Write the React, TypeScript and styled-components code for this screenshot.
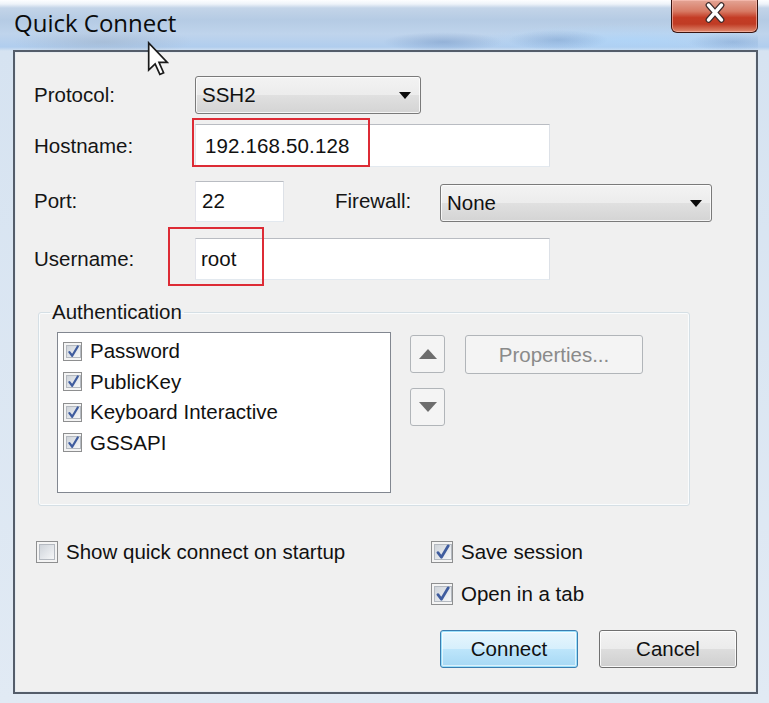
import React from "react";
import styled, { createGlobalStyle } from "styled-components";

const Global = createGlobalStyle`
  html, body { margin: 0; padding: 0; background: #ffffff; }
  body { font-family: "Liberation Sans", Arial, sans-serif; color: #141414; }
`;

const Window = styled.div`
  position: relative;
  width: 769px;
  height: 703px;
  box-sizing: border-box;
  display: flex;
  flex-direction: column;
  padding: 0 11px 9px 13px;
  overflow: hidden;
  background: linear-gradient(
    180deg,
    #fdfeff 0px,
    #eef3f9 4px,
    #c3d4e8 8px,
    #b5cbe4 20px,
    #bfd4ec 34px,
    #b0cdee 47px,
    #d6e3f1 51px,
    #e1eaf4 100%
  );
`;

const TitleBar = styled.div`
  height: 50px;
  flex: none;
  display: flex;
  align-items: flex-start;
  background:
    radial-gradient(ellipse 60px 10px at 430px 42px, rgba(60, 100, 160, 0.28), transparent),
    radial-gradient(ellipse 50px 10px at 545px 40px, rgba(60, 100, 160, 0.25), transparent),
    radial-gradient(ellipse 45px 9px at 720px 42px, rgba(60, 100, 160, 0.22), transparent),
    radial-gradient(ellipse 90px 14px at 90px 42px, rgba(120, 130, 145, 0.22), transparent),
    radial-gradient(ellipse 160px 16px at 620px 40px, rgba(170, 215, 255, 0.55), transparent);
`;

const Title = styled.div`
  padding: 8px 0 0 1px;
  font-family: "Open Sans", "Liberation Sans", sans-serif;
  font-size: 24px;
  line-height: 30px;
  color: #0b0b0b;
`;

const CloseButton = styled.div`
  margin-left: auto;
  width: 87px;
  height: 33px;
  box-sizing: border-box;
  border: 1px solid #3a1410;
  border-top: none;
  border-radius: 0 0 6px 6px;
  display: flex;
  justify-content: center;
  align-items: flex-start;
  padding-top: 2px;
  background: linear-gradient(180deg, #e4a596 0%, #d77a64 35%, #c43c25 55%, #c03b24 75%, #df8a6f 100%);
  box-shadow: inset 0 0 0 1px rgba(255, 200, 190, 0.55);
`;

const Cursor = styled.svg`
  position: absolute;
  left: 147px;
  top: 41px;
  pointer-events: none;
`;

const Client = styled.div`
  flex: 1;
  display: flex;
  flex-direction: column;
  box-sizing: border-box;
  border: 2px solid #545d6a;
  background: #f0f0f0;
  padding: 0 0 0 19px;
  box-shadow: inset 0 0 0 1px #e6ebf0;
`;

const Row = styled.div<{ $top: number; $h: number }>`
  display: flex;
  align-items: center;
  margin-top: ${(p) => p.$top}px;
  height: ${(p) => p.$h}px;
`;

const FieldLabel = styled.div<{ $w: number; $ml?: number }>`
  width: ${(p) => p.$w}px;
  margin-left: ${(p) => p.$ml ?? 0}px;
  flex: none;
  font-size: 20.5px;
  color: #151515;
`;

const TextBox = styled.div<{ $w: number; $h: number; $pad: number; $ls?: number }>`
  position: relative;
  box-sizing: border-box;
  width: ${(p) => p.$w}px;
  height: ${(p) => p.$h}px;
  padding-left: ${(p) => p.$pad}px;
  display: flex;
  align-items: center;
  flex: none;
  background: #ffffff;
  border: 1px solid;
  border-color: #b9bcc2 #dde1e7 #e3e9ef #e2e3ea;
  font-size: 20.5px;
  letter-spacing: ${(p) => p.$ls ?? 0}px;
  color: #111;
`;

const Highlight = styled.div<{ $l: number; $t: number; $w: number; $h: number }>`
  position: absolute;
  left: ${(p) => p.$l}px;
  top: ${(p) => p.$t}px;
  width: ${(p) => p.$w}px;
  height: ${(p) => p.$h}px;
  box-sizing: border-box;
  border: 2px solid #dd2b35;
  pointer-events: none;
`;

const Combo = styled.div<{ $w: number; $self?: string }>`
  box-sizing: border-box;
  width: ${(p) => p.$w}px;
  height: 38px;
  flex: none;
  align-self: ${(p) => p.$self ?? "center"};
  display: flex;
  align-items: center;
  justify-content: space-between;
  padding: 0 9px 0 6px;
  border: 1px solid #7a7a7a;
  border-radius: 3px;
  background: linear-gradient(180deg, #f3f3f3 0%, #ececec 50%, #e0e0e0 51%, #d4d4d4 100%);
  box-shadow: inset 0 0 0 1px rgba(255, 255, 255, 0.75);
  font-size: 20.5px;
  color: #111;
`;

const ComboArrow = styled.span`
  width: 0;
  height: 0;
  border-left: 6px solid transparent;
  border-right: 6px solid transparent;
  border-top: 7px solid #0a0a0a;
`;

const Group = styled.fieldset`
  margin: 20px 0 0 4px;
  width: 652px;
  box-sizing: border-box;
  border: 1px solid #d5dfe5;
  border-radius: 3px;
  padding: 8px 18px 12px 18px;
  box-shadow: inset 0 0 0 1px #fafcfd;
`;

const Legend = styled.legend`
  margin-left: -7px;
  padding: 0 2px;
  font-size: 20.5px;
  line-height: 24px;
  color: #151515;
`;

const AuthBody = styled.div`
  display: flex;
  align-items: flex-start;
`;

const ListBox = styled.div`
  box-sizing: border-box;
  width: 334px;
  height: 161px;
  flex: none;
  border: 1px solid #828790;
  background: #ffffff;
  padding: 3px 0 0 5px;
  display: flex;
  flex-direction: column;
`;

const ListItem = styled.div`
  height: 30.5px;
  display: flex;
  align-items: center;
  gap: 8px;
  font-size: 20.5px;
  color: #111;
`;

const ArrowColumn = styled.div`
  display: flex;
  flex-direction: column;
  gap: 15px;
  margin: 3px 0 0 19px;
`;

const SmallButton = styled.div`
  box-sizing: border-box;
  width: 35px;
  height: 38px;
  display: flex;
  align-items: center;
  justify-content: center;
  border: 1px solid #b1b5b9;
  border-radius: 3px;
  background: #f4f4f4;
`;

const Tri = styled.span<{ $up?: boolean }>`
  width: 0;
  height: 0;
  border-left: 9px solid transparent;
  border-right: 9px solid transparent;
  ${(p) => (p.$up ? "border-bottom: 10px solid #6d6d6d;" : "border-top: 10px solid #6d6d6d;")}
`;

const DisabledButton = styled.div`
  box-sizing: border-box;
  width: 178px;
  height: 39px;
  margin: 3px 0 0 20px;
  display: flex;
  align-items: center;
  justify-content: center;
  border: 1px solid #b1b5b9;
  border-radius: 3px;
  background: #f4f4f4;
  font-size: 20.5px;
  color: #8a8a8a;
`;

const Bottom = styled.div`
  display: flex;
  margin-top: 35px;
`;

const LeftCol = styled.div`
  width: 397px;
  padding-left: 2px;
  box-sizing: border-box;
`;

const RightCol = styled.div`
  display: flex;
  flex-direction: column;
  gap: 20px;
`;

const CheckRow = styled.label`
  display: flex;
  align-items: center;
  gap: 8px;
  height: 22px;
  font-size: 20.5px;
  color: #111;
`;

const Box = styled.span<{ $size: number }>`
  box-sizing: border-box;
  width: ${(p) => p.$size}px;
  height: ${(p) => p.$size}px;
  flex: none;
  border: 1px solid #8e8f90;
  background: #f4f4f4;
  padding: 2px;
  display: flex;
`;

const BoxInner = styled.span`
  flex: 1;
  display: flex;
  align-items: center;
  justify-content: center;
  border: 1px solid #b4b9c0;
  background: linear-gradient(135deg, #cfd4da 0%, #e4e7eb 55%, #f6f7f8 100%);
`;

const ButtonRow = styled.div`
  display: flex;
  gap: 21px;
  margin: 5px 0 0 9px;
`;

const PushButton = styled.div<{ $default?: boolean }>`
  box-sizing: border-box;
  width: 138px;
  height: 38px;
  display: flex;
  align-items: center;
  justify-content: center;
  border-radius: 3px;
  font-size: 20.5px;
  color: #111;
  border: 1px solid ${(p) => (p.$default ? "#3a7db0" : "#707070")};
  background: ${(p) =>
    p.$default
      ? "linear-gradient(180deg, #e8f6fd 0%, #d6effc 50%, #bde5fb 51%, #a6d8f4 100%)"
      : "linear-gradient(180deg, #f3f3f3 0%, #ebebeb 50%, #dddddd 51%, #cfcfcf 100%)"};
  box-shadow: ${(p) =>
    p.$default
      ? "inset 0 0 0 1px #9be0fb, inset 0 0 0 2px rgba(255,255,255,0.6)"
      : "inset 0 0 0 1px rgba(255,255,255,0.85)"};
`;

const Check: React.FC<{ size: number; checked?: boolean }> = ({ size, checked = true }) => (
  <Box $size={size}>
    <BoxInner>
      {checked && (
        <svg width={size - 6} height={size - 6} viewBox="0 0 14 14">
          <path d="M2.6 7.6 L5.6 11.6 L11.6 1.6" fill="none" stroke="#3f5c9e" strokeWidth="2.4" strokeLinecap="round" strokeLinejoin="round" />
        </svg>
      )}
    </BoxInner>
  </Box>
);

export default function App() {
  return (
    <>
      <Global />
      <Window>
        <TitleBar>
          <Title>Quick Connect</Title>
          <CloseButton>
            <svg width="22" height="21" viewBox="0 0 24 22">
              <path d="M5 3 L19 19 M19 3 L5 19" stroke="#3b2a2a" strokeWidth="6.5" strokeLinecap="round" />
              <path d="M5 3 L19 19 M19 3 L5 19" stroke="#ffffff" strokeWidth="4" strokeLinecap="round" />
            </svg>
          </CloseButton>
        </TitleBar>
        <Client>
          <Row $top={24} $h={38}>
            <FieldLabel $w={161}>Protocol:</FieldLabel>
            <Combo $w={226}>
              <span>SSH2</span>
              <ComboArrow />
            </Combo>
          </Row>
          <Row $top={10} $h={43}>
            <FieldLabel $w={161}>Hostname:</FieldLabel>
            <TextBox $w={355} $h={43} $pad={9} $ls={0.15}>
              192.168.50.128
              <Highlight $l={-4} $t={-7} $w={178} $h={49} />
            </TextBox>
          </Row>
          <Row $top={13} $h={42}>
            <FieldLabel $w={161}>Port:</FieldLabel>
            <TextBox $w={89} $h={41} $pad={6}>
              22
            </TextBox>
            <FieldLabel $w={105} $ml={51}>
              Firewall:
            </FieldLabel>
            <Combo $w={272} $self="flex-end">
              <span>None</span>
              <ComboArrow />
            </Combo>
          </Row>
          <Row $top={16} $h={42}>
            <FieldLabel $w={161}>Username:</FieldLabel>
            <TextBox $w={355} $h={42} $pad={5}>
              root
              <Highlight $l={-28} $t={-12} $w={96} $h={59} />
            </TextBox>
          </Row>
          <Group>
            <Legend>Authentication</Legend>
            <AuthBody>
              <ListBox>
                {["Password", "PublicKey", "Keyboard Interactive", "GSSAPI"].map((t) => (
                  <ListItem key={t}>
                    <Check size={19} />
                    {t}
                  </ListItem>
                ))}
              </ListBox>
              <ArrowColumn>
                <SmallButton>
                  <Tri $up />
                </SmallButton>
                <SmallButton>
                  <Tri />
                </SmallButton>
              </ArrowColumn>
              <DisabledButton>Properties...</DisabledButton>
            </AuthBody>
          </Group>
          <Bottom>
            <LeftCol>
              <CheckRow>
                <Check size={22} checked={false} />
                Show quick connect on startup
              </CheckRow>
            </LeftCol>
            <RightCol>
              <CheckRow>
                <Check size={22} />
                Save session
              </CheckRow>
              <CheckRow>
                <Check size={22} />
                Open in a tab
              </CheckRow>
              <ButtonRow>
                <PushButton $default>Connect</PushButton>
                <PushButton>Cancel</PushButton>
              </ButtonRow>
            </RightCol>
          </Bottom>
        </Client>
        <Cursor width="22" height="36" viewBox="0 0 13 21">
          <path d="M1 1 L1 17 L4.8 13.4 L7.6 19.6 L9.8 18.6 L7.1 12.5 L12 12.5 Z" fill="#ffffff" stroke="#1a1a1a" strokeWidth="1" strokeLinejoin="miter" />
        </Cursor>
      </Window>
    </>
  );
}
